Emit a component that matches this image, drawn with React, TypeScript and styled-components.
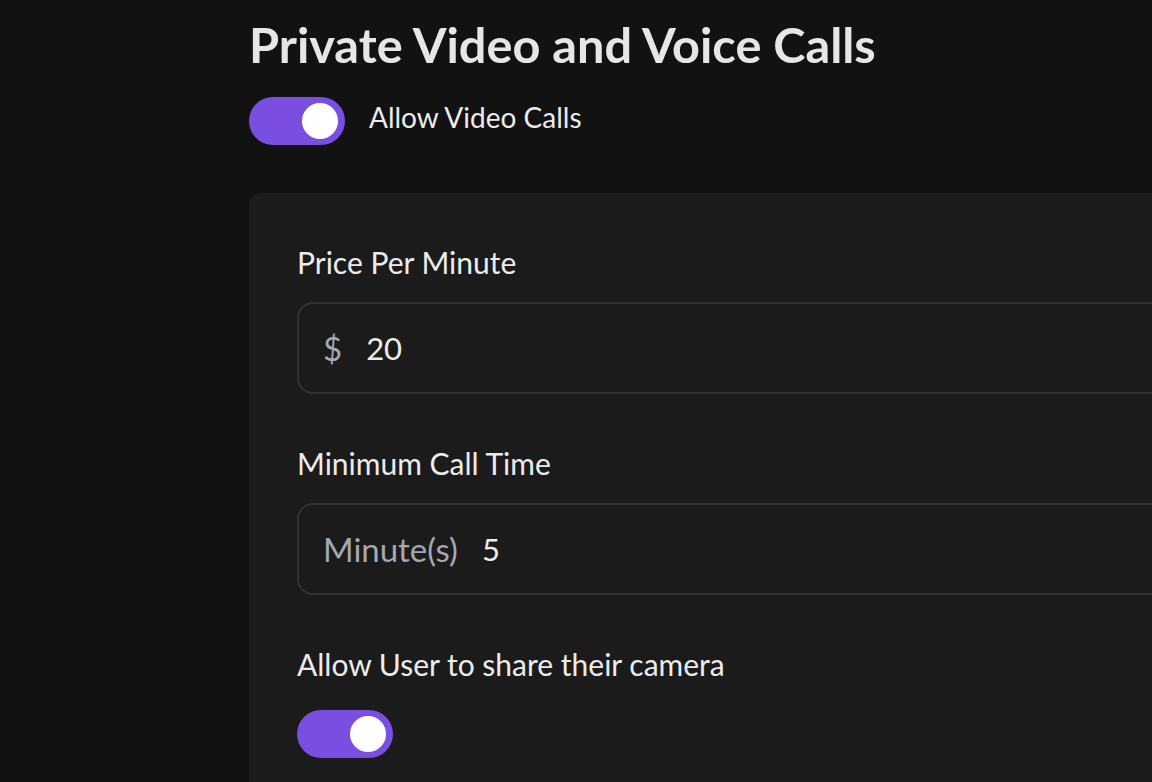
import React from 'react';
import styled, { createGlobalStyle } from 'styled-components';

const GlobalStyle = createGlobalStyle`
  html, body {
    margin: 0;
    padding: 0;
    background: #121212;
    overflow: hidden;
  }
  body {
    font-family: Lato, "Noto Sans", sans-serif;
    color: #ececec;
  }
`;

const Page = styled.div`
  width: 1152px;
  height: 782px;
  padding: 14px 0 0 249px;
  box-sizing: border-box;
  overflow: hidden;
`;

const Title = styled.h1`
  margin: 0;
  font-size: 48.7px;
  font-weight: 700;
  line-height: 60px;
  color: #e6e6e6;
`;

const ToggleRow = styled.label`
  display: flex;
  align-items: center;
  gap: 24px;
  margin-top: 23px;
  font-size: 28px;
  color: #ececec;
`;

const ToggleText = styled.span`
  padding-bottom: 8px;
`;

// margin-top collapses with the label's margin-bottom, so it is the full gap
const Track = styled.span<{ $on: boolean; $gap?: number }>`
  display: flex;
  align-items: center;
  justify-content: ${(p) => (p.$on ? 'flex-end' : 'flex-start')};
  width: 96px;
  height: 48px;
  margin-top: ${(p) => p.$gap ?? 0}px;
  padding: 0 7px;
  box-sizing: border-box;
  border-radius: 24px;
  background: ${(p) => (p.$on ? '#7a4ee0' : '#3a3a3a')};
  flex-shrink: 0;
`;

const Knob = styled.span`
  width: 36px;
  height: 36px;
  border-radius: 50%;
  background: #ffffff;
`;

const Card = styled.section`
  margin-top: 48px;
  background: #1b1b1b;
  border-radius: 12px 0 0 0;
  padding: 51px 0 0 48px;
  height: 600px;
`;

const Field = styled.div`
  margin-bottom: 51px;
`;

const Label = styled.div`
  font-size: 30px;
  line-height: 36px;
  color: #ececec;
  margin-bottom: 22px;
`;

const InputGroup = styled.div`
  display: flex;
  height: 92px;
  box-sizing: border-box;
`;

const Addon = styled.span`
  display: flex;
  align-items: center;
  padding: 0 24px 0 24px;
  border: 2px solid #333333;
  border-right: none;
  border-radius: 16px 0 0 16px;
  font-size: 33px;
  color: #a3a8b2;
`;

const Input = styled.input`
  flex: 1;
  min-width: 0;
  padding: 0;
  background: transparent;
  border: 2px solid #333333;
  border-left: none;
  border-right: none;
  font-family: inherit;
  font-size: 31px;
  color: #ececec;
  outline: none;
`;

function Toggle({ on, gap }: { on: boolean; gap?: number }) {
  return (
    <Track $on={on} $gap={gap}>
      <Knob />
    </Track>
  );
}

export default function App() {
  return (
    <Page>
      <GlobalStyle />
      <Title>Private Video and Voice Calls</Title>
      <ToggleRow>
        <Toggle on />
        <ToggleText>Allow Video Calls</ToggleText>
      </ToggleRow>
      <Card>
        <Field>
          <Label>Price Per Minute</Label>
          <InputGroup>
            <Addon>$</Addon>
            <Input defaultValue="20" />
          </InputGroup>
        </Field>
        <Field>
          <Label>Minimum Call Time</Label>
          <InputGroup>
            <Addon>Minute(s)</Addon>
            <Input defaultValue="5" />
          </InputGroup>
        </Field>
        <Field>
          <Label>Allow User to share their camera</Label>
          <Toggle on gap={28} />
        </Field>
      </Card>
    </Page>
  );
}
